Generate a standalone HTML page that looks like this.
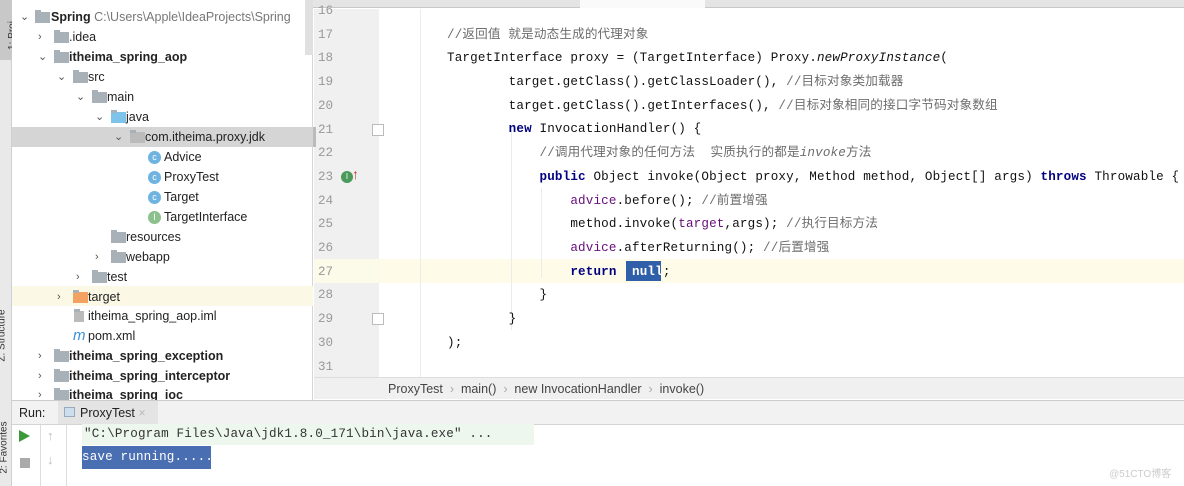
<!DOCTYPE html><html><head><meta charset="utf-8"><style>
*{margin:0;padding:0;box-sizing:border-box}
body{width:1184px;height:486px;overflow:hidden;background:#fff;position:relative;font-family:"Liberation Sans","Noto Sans CJK SC",sans-serif;font-size:12.5px;color:#222}
.a{position:absolute}
.row{position:absolute;left:12px;width:301px;height:20px;line-height:20px;white-space:nowrap}
.row span{position:absolute}
.ar{color:#555;font-size:11px}
.fd{width:15px;height:11px;top:5px;background:#a9b1b8}
.fd:before{content:"";position:absolute;left:0;top:-2px;width:6px;height:3px;background:#a9b1b8}
.ci{width:13px;height:13px;top:4px;border-radius:50%;background:#6fb3e0;color:#fff;font-size:9px;line-height:13px;text-align:center}
.code{position:absolute;left:0;font-family:"Liberation Mono","Noto Sans CJK SC",monospace;font-size:12.6px;white-space:pre;line-height:23.7px;height:23.7px;color:#111;letter-spacing:0.15px}
.cm{color:#6d6d6d;font-family:"Liberation Mono","Noto Sans CJK SC",monospace}
.kw{color:#000080;font-weight:bold}
.pf{color:#660e7a}
.ln{position:absolute;left:318px;color:#999;font-family:"Liberation Mono",monospace;font-size:12.6px;line-height:23.7px}
</style></head><body>
<div class="a" style="left:0;top:0;width:12px;height:486px;background:#e9e9e9;border-right:1px solid #d0d0d0"></div>
<div class="a" style="left:0;top:0;width:12px;height:60px;background:#c8c8c8"></div>
<div class="a" style="left:-2px;top:30px;transform:rotate(-90deg);font-size:10px;color:#333;white-space:nowrap">1: Proj</div>
<div class="a" style="left:-24px;top:330px;transform:rotate(-90deg);font-size:10px;color:#333;white-space:nowrap">Z: Structure</div>
<div class="a" style="left:-22px;top:442px;transform:rotate(-90deg);font-size:10px;color:#333;white-space:nowrap">2: Favorites</div>
<div class="a" style="left:313px;top:0;width:871px;height:8px;background:#e4e4e4;border-bottom:1px solid #c8c8c8"></div>
<div class="a" style="left:580px;top:0;width:125px;height:8px;background:#fafafa"></div>
<div class="a" style="left:12px;top:0;width:301px;height:400px;background:#fff;border-right:1px solid #d6d6d6"></div>
<div class="a" style="left:12px;top:127px;width:301px;height:20px;background:#d5d5d5"></div>
<div class="a" style="left:12px;top:286px;width:301px;height:20px;background:#fbf9e6"></div>
<div class="a" style="left:305px;top:0;width:8px;height:55px;background:#e0e0e0"></div>

<div class="row" style="top:7px"><span class="ar" style="left:8px">⌄</span><span class="fd" style="left:23px"></span><span style="left:39px"><b>Spring</b> <span style="position:static;color:#777">C:\Users\Apple\IdeaProjects\Spring</span></span></div>
<div class="row" style="top:27px"><span class="ar" style="left:26px">›</span><span class="fd" style="left:42px"></span><span style="left:57px">.idea</span></div>
<div class="row" style="top:47px"><span class="ar" style="left:26px">⌄</span><span class="fd" style="left:42px"></span><span style="left:57px;font-weight:bold">itheima_spring_aop</span></div>
<div class="row" style="top:67px"><span class="ar" style="left:45px">⌄</span><span class="fd" style="left:61px"></span><span style="left:76px">src</span></div>
<div class="row" style="top:87px"><span class="ar" style="left:64px">⌄</span><span class="fd" style="left:80px"></span><span style="left:95px">main</span></div>
<div class="row" style="top:107px"><span class="ar" style="left:83px">⌄</span><span class="fd" style="left:99px;background:#7ec3ea"></span><span style="left:114px">java</span></div>
<div class="row" style="top:127px"><span class="ar" style="left:102px">⌄</span><span class="fd" style="left:118px;background:#bbb"></span><span style="left:133px">com.itheima.proxy.jdk</span></div>
<div class="row" style="top:147px"><span class="ci" style="left:136px">c</span><span style="left:152px">Advice</span></div>
<div class="row" style="top:167px"><span class="ci" style="left:136px">c</span><span style="left:152px">ProxyTest</span></div>
<div class="row" style="top:187px"><span class="ci" style="left:136px">c</span><span style="left:152px">Target</span></div>
<div class="row" style="top:207px"><span class="ci" style="left:136px;background:#8cc08c">I</span><span style="left:152px">TargetInterface</span></div>
<div class="row" style="top:227px"><span class="fd" style="left:99px"></span><span style="left:114px">resources</span></div>
<div class="row" style="top:247px"><span class="ar" style="left:83px">›</span><span class="fd" style="left:99px"></span><span style="left:114px">webapp</span></div>
<div class="row" style="top:267px"><span class="ar" style="left:64px">›</span><span class="fd" style="left:80px"></span><span style="left:95px">test</span></div>
<div class="row" style="top:287px"><span class="ar" style="left:45px">›</span><span class="fd" style="left:61px;background:#f4a262"></span><span style="left:76px">target</span></div>
<div class="row" style="top:306px"><span class="fd" style="left:62px;width:10px;background:#bbb"></span><span style="left:76px">itheima_spring_aop.iml</span></div>
<div class="row" style="top:326px"><span style="left:61px;color:#3b8fd6;font-style:italic;font-size:15px">m</span><span style="left:76px">pom.xml</span></div>
<div class="row" style="top:346px"><span class="ar" style="left:26px">›</span><span class="fd" style="left:42px"></span><span style="left:57px;font-weight:bold">itheima_spring_exception</span></div>
<div class="row" style="top:366px"><span class="ar" style="left:26px">›</span><span class="fd" style="left:42px"></span><span style="left:57px;font-weight:bold">itheima_spring_interceptor</span></div>
<div class="row" style="top:385px"><span class="ar" style="left:26px">›</span><span class="fd" style="left:42px"></span><span style="left:57px;font-weight:bold">itheima_spring_ioc</span></div>

<div class="a" style="left:314px;top:9px;width:65px;height:368px;background:#f0f0f0"></div>
<div class="a" style="left:313px;top:127px;width:3px;height:20px;background:#bbb"></div>
<div class="a" style="left:314px;top:259px;width:870px;height:24px;background:#fcfae8"></div>
<div class="a" style="left:379px;top:259px;width:805px;height:24px;background:#fefce8"></div>
<div class="a" style="left:626px;top:261px;width:35px;height:20px;background:#2f5fa8"></div>
<div class="a" style="left:420px;top:9px;width:1px;height:368px;background:#ececec"></div>
<div class="a" style="left:511px;top:130px;width:1px;height:200px;background:#ececec"></div>
<div class="a" style="left:541px;top:188px;width:1px;height:90px;background:#ececec"></div>

<div class="ln" style="top:0">16</div>
<div class="ln" style="top:23.7px">17</div><div class="ln" style="top:47.4px">18</div><div class="ln" style="top:71.1px">19</div><div class="ln" style="top:94.8px">20</div><div class="ln" style="top:118.5px">21</div><div class="ln" style="top:142.2px">22</div><div class="ln" style="top:165.9px">23</div><div class="ln" style="top:189.6px">24</div><div class="ln" style="top:213.3px">25</div><div class="ln" style="top:237px">26</div><div class="ln" style="top:260.7px">27</div><div class="ln" style="top:284.4px">28</div><div class="ln" style="top:308.1px">29</div><div class="ln" style="top:331.8px">30</div><div class="ln" style="top:355.5px">31</div>
<div class="a" style="left:341px;top:171px;width:12px;height:12px;border-radius:50%;background:#4a9a5a;color:#fff;font-size:8px;text-align:center;line-height:12px">I</div>
<div class="a" style="left:352px;top:166px;color:#c0392b;font-size:14px;font-weight:bold">↑</div>
<div class="a" style="left:372px;top:124px;width:12px;height:12px;border:1px solid #bbb;background:#fff"></div>
<div class="a" style="left:372px;top:313px;width:12px;height:12px;border:1px solid #bbb;background:#fff"></div>

<div class="a" style="left:447px;top:23.7px">
<div class="code" style="top:0"><span class="cm">//返回值 就是动态生成的代理对象</span></div>
<div class="code" style="top:23.7px">TargetInterface proxy = (TargetInterface) Proxy.<i>newProxyInstance</i>(</div>
<div class="code" style="top:47.4px">        target.getClass().getClassLoader(), <span class="cm">//目标对象类加载器</span></div>
<div class="code" style="top:71.1px">        target.getClass().getInterfaces(), <span class="cm">//目标对象相同的接口字节码对象数组</span></div>
<div class="code" style="top:94.8px">        <span class="kw">new</span> InvocationHandler() {</div>
<div class="code" style="top:118.5px">            <span class="cm">//调用代理对象的任何方法  实质执行的都是<i>invoke</i>方法</span></div>
<div class="code" style="top:142.2px">            <span class="kw">public</span> Object invoke(Object proxy, Method method, Object[] args) <span class="kw">throws</span> Throwable {</div>
<div class="code" style="top:165.9px">                <span class="pf">advice</span>.before(); <span class="cm">//前置增强</span></div>
<div class="code" style="top:189.6px">                method.invoke(<span class="pf">target</span>,args); <span class="cm">//执行目标方法</span></div>
<div class="code" style="top:213.3px">                <span class="pf">advice</span>.afterReturning(); <span class="cm">//后置增强</span></div>
<div class="code" style="top:237px">                <span class="kw">return</span>  <span style="color:#fff;font-weight:bold">null</span>;</div>
<div class="code" style="top:260.7px">            }</div>
<div class="code" style="top:284.4px">        }</div>
<div class="code" style="top:308.1px">);</div>
</div>

<div class="a" style="left:314px;top:377px;width:870px;height:22px;background:#f0f0f0;border-top:1px solid #ddd;line-height:22px;color:#444;font-size:12.5px;padding-left:74px">ProxyTest <span style="color:#aaa">&nbsp;›&nbsp;</span> main() <span style="color:#aaa">&nbsp;›&nbsp;</span> new InvocationHandler <span style="color:#aaa">&nbsp;›&nbsp;</span> invoke()</div>
<div class="a" style="left:12px;top:400px;width:1172px;height:25px;background:#f2f2f2;border-top:1px solid #ccc;border-bottom:1px solid #d4d4d4"></div>
<div class="a" style="left:58px;top:401px;width:100px;height:23px;background:#e4e4e4"></div>
<div class="a" style="left:19px;top:404px;line-height:18px">Run:</div>
<div class="a" style="left:64px;top:407px;width:11px;height:10px;border:1px solid #9ab;background:#cde"></div>
<div class="a" style="left:80px;top:404px;line-height:18px">ProxyTest <span style="color:#bbb">×</span></div>
<div class="a" style="left:40px;top:425px;width:1px;height:61px;background:#ddd"></div>
<div class="a" style="left:66px;top:425px;width:1px;height:61px;background:#ddd"></div>
<div class="a" style="left:19px;top:430px;width:0;height:0;border-left:11px solid #3a9a3a;border-top:6px solid transparent;border-bottom:6px solid transparent"></div>
<div class="a" style="left:20px;top:458px;width:10px;height:10px;background:#aaa"></div>
<div class="a" style="left:47px;top:428px;color:#bbb;font-size:13px">↑</div>
<div class="a" style="left:47px;top:452px;color:#bbb;font-size:13px">↓</div>
<div class="a" style="left:82px;top:424px;width:452px;height:21px;background:#edf7ed"></div>
<div class="a" style="left:82px;top:446px;width:129px;height:23px;background:#4a6eb2"></div>
<div class="code" style="left:84px;top:423px;color:#333">"C:\Program Files\Java\jdk1.8.0_171\bin\java.exe" ...</div>
<div class="code" style="left:82px;top:446px;color:#fff">save running.....</div>
<div class="a" style="left:1109px;top:465px;font-size:10px;color:#ccc">@51CTO博客</div>
</body></html>
